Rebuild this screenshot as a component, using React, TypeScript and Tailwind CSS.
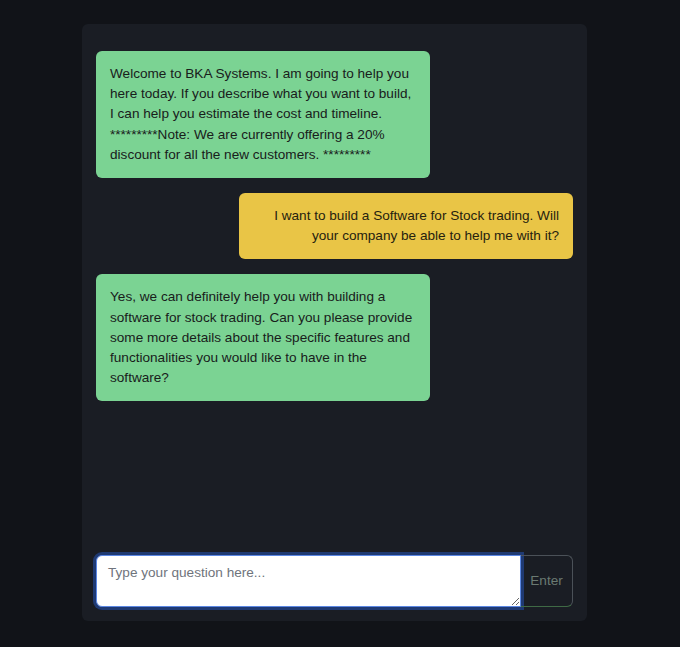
import { useState } from 'react'

type Message = { from: 'bot' | 'user'; text: string }

const messages: Message[] = [
  {
    from: 'bot',
    text: 'Welcome to BKA Systems. I am going to help you here today. If you describe what you want to build, I can help you estimate the cost and timeline. *********Note: We are currently offering a 20% discount for all the new customers. *********',
  },
  {
    from: 'user',
    text: 'I want to build a Software for Stock trading. Will your company be able to help me with it?',
  },
  {
    from: 'bot',
    text: 'Yes, we can definitely help you with building a software for stock trading. Can you please provide some more details about the specific features and functionalities you would like to have in the software?',
  },
]

export default function App() {
  const [question, setQuestion] = useState('')

  return (
    <div
      className="min-h-screen bg-[#111318] flex pl-[82px] pt-6 pb-[27px]"
      style={{ fontFamily: '"Liberation Sans", Arial, sans-serif' }}>
      <div className="w-[505px] h-[597px] bg-[#1a1d24] rounded-md flex flex-col px-[14px] pt-[27px] pb-[14px]">
        {/* Messages */}
        <div className="flex-1 flex flex-col gap-[15px]">
          {messages.map((m, i) => (
            <div
              key={i}
              className={
                m.from === 'bot'
                  ? 'self-start w-[334px] bg-[#7bd393] text-[#18201b] rounded-md px-[14px] py-[13px] text-[13.6px] leading-[20.2px]'
                  : 'self-end w-[334px] bg-[#e9c546] text-[#26220f] rounded-md px-[14px] py-[13px] text-[13.6px] leading-[20.2px] text-right'
              }>
              {m.text}
            </div>
          ))}
        </div>

        {/* Input */}
        <div className="flex h-[52px]">
          <textarea
            value={question}
            onChange={e => setQuestion(e.target.value)}
            placeholder="Type your question here..."
            className="flex-1 bg-white rounded-l-md border border-[#5b87e3] ring-[3px] ring-[#1f3a73] px-[11px] py-[7px] text-[13.6px] text-gray-800 placeholder:text-[#6f747c] outline-none"
          />
          <button className="w-[52px] rounded-r-md border border-l-0 border-[#4b5158] border-b-[#3f6a45] text-[13.6px] text-[#6b7a72]">
            Enter
          </button>
        </div>
      </div>
    </div>
  )
}
